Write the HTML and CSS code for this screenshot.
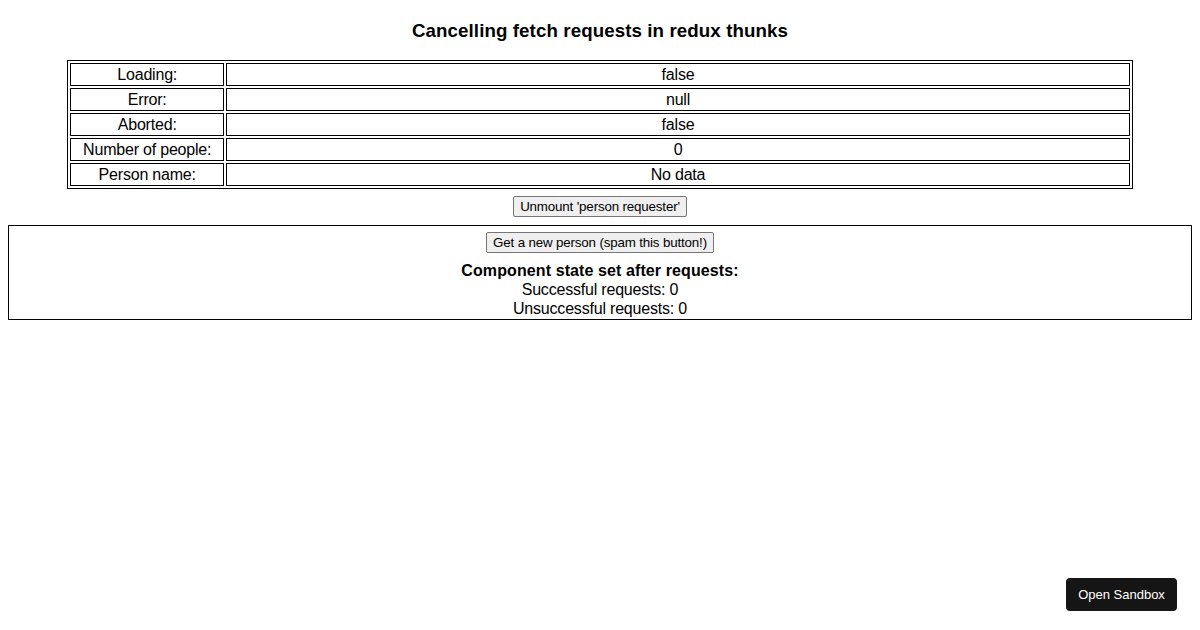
FILE: index.html
```
<!DOCTYPE html>
<html>
<head>
<meta charset="utf-8">
<link rel="stylesheet" href="styles.css">
</head>
<body>
<h3 class="title">Cancelling fetch requests in redux thunks</h3>
<table class="state" border="1">
<tbody>
<tr><td class="label">Loading:</td><td>false</td></tr>
<tr><td class="label">Error:</td><td>null</td></tr>
<tr><td class="label">Aborted:</td><td>false</td></tr>
<tr><td class="label">Number of people:</td><td>0</td></tr>
<tr><td class="label">Person name:</td><td>No data</td></tr>
</tbody>
</table>
<div class="center unmount-row"><button class="btn">Unmount 'person requester'</button></div>
<div class="requester">
<div class="center"><button class="btn">Get a new person (spam this button!)</button></div>
<div class="summary-title">Component state set after requests:</div>
<div>Successful requests: 0</div>
<div>Unsuccessful requests: 0</div>
</div>
<a class="sandbox">Open Sandbox</a>
</body>
</html>
```
FILE: styles.css
```
body {
  margin: 8px;
  font-family: "Liberation Sans", Arial, sans-serif;
  font-size: 16px;
  line-height: 19px;
  letter-spacing: -0.2px;
  color: #000;
  background: #fff;
  text-align: center;
}
.title {
  font-size: 18.72px;
  line-height: 22px;
  letter-spacing: 0.1px;
  font-weight: bold;
  margin: 12px 0 18px;
}
.state {
  width: 90%;
  margin: 0 auto;
  border-collapse: separate;
  border-spacing: 2px;
  border: 1px solid #000;
}
.state td {
  border: 1px solid #000;
  padding: 1px;
  height: 19px;
  line-height: 18px;
  text-align: center;
}
.state td.label {
  width: 150px;
}
.center {
  text-align: center;
}
.unmount-row {
  margin: 7px 0 8px;
  line-height: 0;
}
.btn {
  font-family: "Liberation Sans", Arial, sans-serif;
  font-size: 13.333px;
  letter-spacing: -0.15px;
  line-height: normal;
  background: #efefef;
  border: 1px solid #767676;
  border-radius: 2px;
  padding: 1px 6px;
  height: 21px;
  color: #000;
}
.requester {
  border: 1px solid #000;
  padding-top: 6px;
  padding-bottom: 1px;
}
.requester .center {
  line-height: 0;
  margin-bottom: 8px;
}
.summary-title {
  font-weight: bold;
  letter-spacing: 0.1px;
}
.sandbox {
  position: fixed;
  right: 23px;
  bottom: 19px;
  width: 111px;
  height: 33px;
  box-sizing: border-box;
  background: #151515;
  color: #fff;
  border-radius: 4px;
  font-size: 13px;
  line-height: 33px;
  letter-spacing: 0;
  text-align: center;
}
```
